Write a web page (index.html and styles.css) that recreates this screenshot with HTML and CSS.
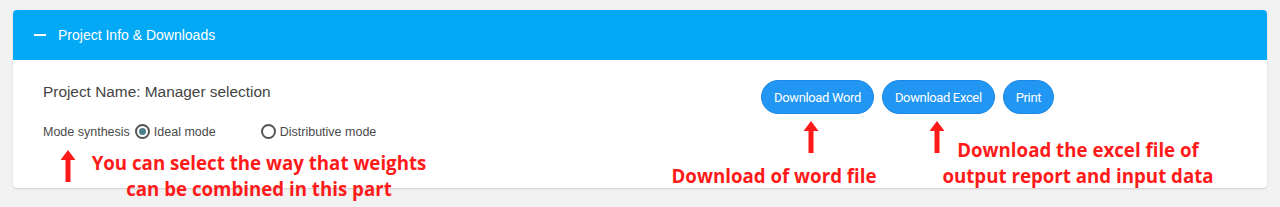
FILE: index.html
```html
<!DOCTYPE html>
<html lang="en">
<head>
    <meta charset="UTF-8">
    <meta name="viewport" content="width=device-width, initial-scale=1.0">
    <link rel="stylesheet" href="styles.css">
</head>
<body>
    <div class="panel">
        <div class="panel-head">
            <span class="toggle"></span>
            <span class="panel-title">Project Info &amp; Downloads</span>
        </div>
        <div class="panel-body">
            <div class="info">
                <p class="project-name">Project Name: Manager selection</p>
                <div class="mode">
                    <span class="mode-label">Mode synthesis</span>
                    <label class="radio"><span class="dot checked"></span>Ideal mode</label>
                    <label class="radio"><span class="dot"></span>Distributive mode</label>
                </div>
            </div>
            <div class="actions">
                <button class="btn">Download Word</button>
                <button class="btn">Download Excel</button>
                <button class="btn">Print</button>
            </div>
        </div>

        <!-- annotations drawn over the screenshot -->
        <svg class="arrow arrow-mode" viewBox="0 0 16 32"><path d="M8 0 L15.5 10 L10.5 10 L10.5 32 L5.5 32 L5.5 10 L0.5 10 Z"/></svg>
        <p class="note note-mode">You can select the way that weights<br>can be combined in this part</p>

        <svg class="arrow arrow-word" viewBox="0 0 16 32"><path d="M8 0 L15.5 10 L10.5 10 L10.5 32 L5.5 32 L5.5 10 L0.5 10 Z"/></svg>
        <p class="note note-word">Download of word file</p>

        <svg class="arrow arrow-excel" viewBox="0 0 16 32"><path d="M8 0 L15.5 10 L10.5 10 L10.5 32 L5.5 32 L5.5 10 L0.5 10 Z"/></svg>
        <p class="note note-excel">Download the excel file of<br>output report and input data</p>
    </div>
</body>
</html>
```

FILE: styles.css
```css
body {
    margin: 0;
    padding: 10px 13px 19px;
    background: #f2f2f2;
    font-family: "Liberation Sans", Arial, sans-serif;
    color: #333;
}

.panel {
    position: relative;
    background: #fff;
    border-radius: 4px;
    box-shadow: 0 1px 2px rgba(0, 0, 0, 0.15);
    height: 178px;
}

.panel-head {
    display: flex;
    align-items: center;
    height: 50px;
    padding: 0 21px;
    background: #03a9f4;
    border-radius: 4px 4px 0 0;
    color: #fff;
}

.toggle {
    width: 12px;
    height: 2px;
    background: #fff;
    margin-right: 12px;
}

.panel-title {
    font-size: 14px;
}

.panel-body {
    display: flex;
    padding: 20px 30px;
}

.info {
    flex: 0 0 718px;
}

.project-name {
    margin: 3px 0 0;
    font-size: 15.4px;
    color: #444;
}

.mode {
    display: flex;
    align-items: center;
    margin-top: 23px;
    font-size: 12.5px;
    color: #4a4a4a;
}

.mode-label {
    margin-right: 5px;
}

.radio {
    display: flex;
    align-items: center;
    margin-right: 45px;
}

.dot {
    width: 11px;
    height: 11px;
    border: 2px solid #555;
    border-radius: 50%;
    margin-right: 4px;
    position: relative;
}

.dot.checked::after {
    content: "";
    position: absolute;
    top: 2px;
    left: 2px;
    width: 7px;
    height: 7px;
    border-radius: 50%;
    background: #4a7e8a;
}

.actions {
    display: flex;
    gap: 8px;
}

.btn {
    height: 34px;
    padding: 0 12px;
    border: 1px solid #1e88e5;
    border-radius: 17px;
    background: #2196f3;
    color: #fff;
    font-family: Roboto, sans-serif;
    font-size: 13px;
    letter-spacing: -0.35px;
    cursor: pointer;
}

.arrow {
    position: absolute;
    width: 16px;
    height: 32px;
    fill: #ff1a1a;
}

.arrow-mode { left: 47px; top: 140px; }
.arrow-word { left: 790px; top: 111px; }
.arrow-excel { left: 916px; top: 111px; }

.note {
    position: absolute;
    margin: 0;
    font-family: "Open Sans", sans-serif;
    font-weight: 700;
    font-size: 18.7px;
    line-height: 26px;
    color: #ff1a1a;
    text-align: center;
    white-space: nowrap;
}

.note-mode { left: 66px; top: 140px; width: 360px; }
.note-word { left: 641px; top: 153px; width: 240px; }
.note-excel { left: 915px; top: 127px; width: 300px; }
```
